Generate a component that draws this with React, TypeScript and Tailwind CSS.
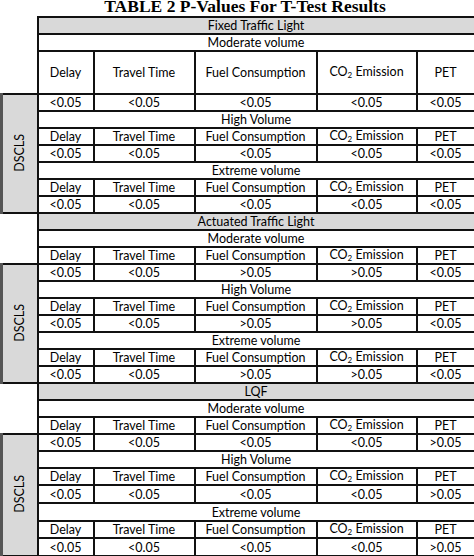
import React from "react";

type Section = { label: string; values: string[] };
type Group = { title: string; tall: boolean; sections: Section[] };

const L = "<0.05";
const G = ">0.05";

const groups: Group[] = [
  {
    title: "Fixed Traffic Light",
    tall: true,
    sections: [
      { label: "Moderate volume", values: [L, L, L, L, L] },
      { label: "High Volume", values: [L, L, L, L, L] },
      { label: "Extreme volume", values: [L, L, L, L, L] },
    ],
  },
  {
    title: "Actuated Traffic Light",
    tall: false,
    sections: [
      { label: "Moderate volume", values: [L, L, G, G, L] },
      { label: "High Volume", values: [L, L, G, G, L] },
      { label: "Extreme volume", values: [L, L, G, G, L] },
    ],
  },
  {
    title: "LQF",
    tall: false,
    sections: [
      { label: "Moderate volume", values: [L, L, L, L, G] },
      { label: "High Volume", values: [L, L, L, L, G] },
      { label: "Extreme volume", values: [L, L, L, L, G] },
    ],
  },
];

const cell = "border-2 border-[#111] p-0 text-center align-middle";

function Co2() {
  return (
    <>
      CO<span className="text-[8px] relative top-[2px]">2</span> Emission
    </>
  );
}

function HeaderRow({ h }: { h: string }) {
  return (
    <tr className={h}>
      <td className={cell}>Delay</td>
      <td className={cell}>Travel Time</td>
      <td className={cell}>Fuel Consumption</td>
      <td className={cell}>
        <Co2 />
      </td>
      <td className={cell}>PET</td>
    </tr>
  );
}

function ValueRow({ values, left, h }: { values: string[]; left?: React.ReactNode; h: string }) {
  return (
    <tr className={h}>
      {left}
      {values.map((v, i) => (
        <td key={i} className={cell}>
          {v}
        </td>
      ))}
    </tr>
  );
}

function LabelRow({ label, h }: { label: string; h: string }) {
  return (
    <tr className={h}>
      <td colSpan={5} className={cell}>
        {label}
      </td>
    </tr>
  );
}

function GroupRows({ g, last }: { g: Group; last: boolean }) {
  const [s1, s2, s3] = g.sections;
  const x = last ? "h-[18px]" : "h-[17px]";
  return (
    <>
      <tr className="h-[17px]">
        <td rowSpan={3} className="p-0" />
        <td colSpan={5} className={`${cell} bg-[#d9d9d9] border-r-[#444]`}>
          {g.title}
        </td>
      </tr>
      <LabelRow label={s1.label} h="h-[17px]" />
      <HeaderRow h={g.tall ? "h-[43px]" : "h-[17px]"} />
      <ValueRow
        values={s1.values}
        h="h-[17px]"
        left={
          <td
            rowSpan={7}
            className="border-2 border-l-[3px] border-[#111] border-l-[#555] bg-[#d9d9d9] p-0 text-center align-middle"
          >
            <span className="inline-block [writing-mode:vertical-rl] rotate-180">DSCLS</span>
          </td>
        }
      />
      <LabelRow label={s2.label} h="h-[17px]" />
      <HeaderRow h="h-[17px]" />
      <ValueRow values={s2.values} h={x} />
      <LabelRow label={s3.label} h={x} />
      <HeaderRow h="h-[17px]" />
      <ValueRow values={s3.values} h={x} />
    </>
  );
}

export default function App() {
  return (
    <div className="w-[474px] h-[556px] overflow-hidden bg-white text-black">
      <div className="h-[16px] overflow-hidden pl-[16px] text-center font-['Liberation_Serif',serif] text-[17.5px] font-bold leading-[12.5px] whitespace-nowrap">
        TABLE 2 P-Values For T-Test Results
      </div>
      <table className="table-fixed border-collapse w-[473px] font-['Lato',sans-serif] text-[12.5px] leading-[13px]">
        <colgroup>
          <col className="w-[36px]" />
          <col className="w-[56px]" />
          <col className="w-[101px]" />
          <col className="w-[122px]" />
          <col className="w-[100px]" />
          <col className="w-[58px]" />
        </colgroup>
        <tbody>
          {groups.map((g, i) => (
            <GroupRows key={g.title} g={g} last={i === groups.length - 1} />
          ))}
        </tbody>
      </table>
    </div>
  );
}
